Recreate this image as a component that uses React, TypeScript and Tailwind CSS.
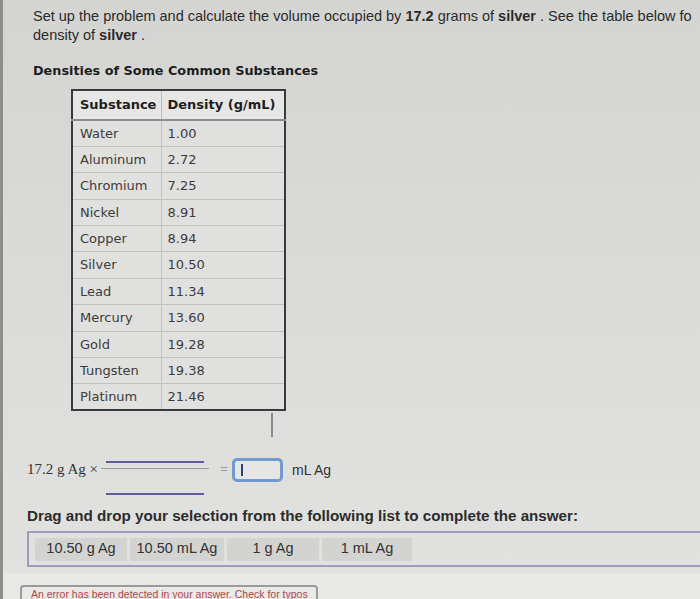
import React from "react";

interface Row {
  name: string;
  density: string;
}

const rows: Row[] = [
  { name: "Water", density: "1.00" },
  { name: "Aluminum", density: "2.72" },
  { name: "Chromium", density: "7.25" },
  { name: "Nickel", density: "8.91" },
  { name: "Copper", density: "8.94" },
  { name: "Silver", density: "10.50" },
  { name: "Lead", density: "11.34" },
  { name: "Mercury", density: "13.60" },
  { name: "Gold", density: "19.28" },
  { name: "Tungsten", density: "19.38" },
  { name: "Platinum", density: "21.46" },
];

const choices = [
  { label: "10.50 g Ag", w: "w-[92px]" },
  { label: "10.50 mL Ag", w: "w-[94px]" },
  { label: "1 g Ag", w: "w-[92px]" },
  { label: "1 mL Ag", w: "w-[90px]" },
];

const sans = "font-['Liberation_Sans',Arial,sans-serif]";
const verdana = "font-['DejaVu_Sans',Verdana,sans-serif]";

function App() {
  return (
    <div className="w-[700px] h-[599px] overflow-hidden bg-linear-to-b from-[#d4d5d2] to-[#e2e3e1] border-l-[3px] border-[#8d8e8c] text-[#222]">
      <div className={`pl-[30px] pt-[7px] text-[14.5px] leading-[19px] whitespace-nowrap text-[#2b2b2b] ${sans}`}>
        <p>
          Set up the problem and calculate the volume occupied by <b>17.2</b> grams of <b>silver</b> . See the table below fo
        </p>
        <p>
          density of <b>silver</b> .
        </p>
      </div>

      <h2 className={`pl-[30px] mt-[16px] text-[12.8px] leading-[19px] font-bold text-[#1e1e1e] ${verdana}`}>
        Densities of Some Common Substances
      </h2>

      <div className="relative ml-[68px] mt-[9px] w-[215px]">
        <table className={`w-full border-2 border-[#3a3a3a] border-collapse text-[13px] ${verdana}`}>
          <thead>
            <tr className="h-[30px] bg-[#e6e6e4] border-b-2 border-[#8e8e8e]">
              <th className="pl-[7px] text-left font-bold text-[#1e1e1e] w-[89px] border-r border-[#bdbdbb]">
                Substance
              </th>
              <th className="pl-[6px] text-left font-bold text-[#1e1e1e]">Density (g/mL)</th>
            </tr>
          </thead>
          <tbody>
            {rows.map((row) => (
              <tr key={row.name} className="h-[26.4px] bg-[#e0e0de] border-b border-[#c2c2c0]">
                <td className="pl-[7px] text-[#3c3c3c] border-r border-[#c2c2c0]">{row.name}</td>
                <td className="pl-[6px] text-[#3c3c3c]">{row.density}</td>
              </tr>
            ))}
          </tbody>
        </table>
        <div className="absolute left-[200px] top-[calc(100%+2px)] w-[2px] h-[24px] bg-[#8a8a8a]" />
      </div>

      <div className="flex items-start pl-[24px] mt-[26px]">
        <span className="mt-[22px] leading-[20px] font-['Liberation_Serif','Times_New_Roman',serif] text-[15px] text-[#333] whitespace-nowrap">
          17.2 g Ag ×
        </span>
        <div className="ml-[3px] flex flex-col items-center w-[108px]">
          <div className="w-[98px] h-[26px] border-b-2 border-[#5f5c9c]" />
          <div className="w-[108px] h-[1px] bg-[#9a9a9a] mt-[5px]" />
          <div className="w-[98px] h-[26px] border-b-2 border-[#5f5c9c]" />
        </div>
        <span className="ml-[11px] mt-[22px] leading-[20px] text-[#9a9a9a] text-[14px]">=</span>
        <div className="ml-[4px] mt-[21px] w-[51px] h-[24px] rounded-[5px] border-[3px] border-[#6f9bd1] bg-[#e6e7e5] flex items-center pl-[6px]">
          <div className="w-[2px] h-[12px] bg-[#26437a]" />
        </div>
        <span className={`ml-[9px] mt-[23px] leading-[20px] text-[14px] text-[#333] ${sans}`}>mL Ag</span>
      </div>

      <p className={`pl-[24px] mt-[11px] leading-[20px] text-[15.2px] font-bold text-[#2c2c2c] whitespace-nowrap ${sans}`}>
        Drag and drop your selection from the following list to complete the answer:
      </p>

      <div className="ml-[24px] mt-[5px] h-[36px] border-y-2 border-l-2 border-[#9d9cbd] flex items-center gap-[3px] pl-[6px]">
        {choices.map((c) => (
          <div
            key={c.label}
            className={`${c.w} h-[23px] bg-[#d3d3d1] flex items-center justify-center text-[14.5px] whitespace-nowrap text-[#333] ${sans}`}
          >
            {c.label}
          </div>
        ))}
      </div>

      <div className="mt-[6px] h-[40px] bg-[#e8e9e7] pt-[12px]">
        <div className="ml-[17px] w-[298px] h-[24px] border-2 border-[#9a9a9a] rounded-t-[4px] bg-[#e9eae8] px-[9px] overflow-hidden">
          <p className={`text-[10.5px] leading-[14px] text-[#b04848] ${sans} whitespace-nowrap`}>
            An error has been detected in your answer. Check for typos
          </p>
        </div>
      </div>
    </div>
  );
}

export default App;
